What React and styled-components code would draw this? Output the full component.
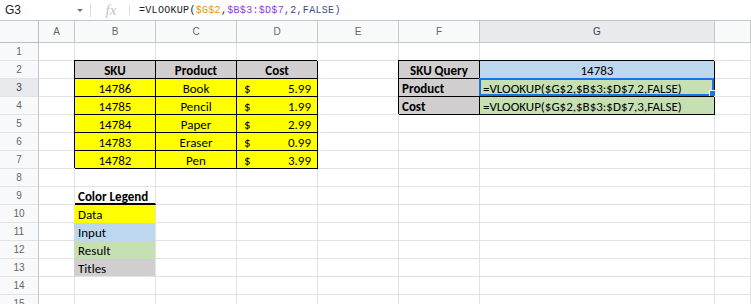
import React from 'react';
import styled, { createGlobalStyle } from 'styled-components';

const GlobalStyle = createGlobalStyle`
  html, body {
    margin: 0;
    padding: 0;
    background: #fff;
  }
  body {
    width: 751px;
    height: 304px;
    overflow: hidden;
  }
`;

const GRID = '#e2e2e2';
const HEAD_LINE = '#c4c7c5';
const YELLOW = '#ffff00';
const BLUE = '#bdd7ee';
const GREEN = '#c6e0b4';
const GRAY = '#d0cece';

const COLS = ['A', 'B', 'C', 'D', 'E', 'F', 'G', ''];

const Sheet = styled.div`
  width: 751px;
  height: 304px;
  overflow: hidden;
  font-family: "Liberation Sans", Arial, sans-serif;
`;

const FormulaBar = styled.div`
  display: flex;
  align-items: center;
  height: 21px;
  box-sizing: border-box;
  border-bottom: 1px solid ${HEAD_LINE};
`;

const NameBox = styled.div`
  display: flex;
  align-items: center;
  justify-content: space-between;
  width: 90px;
  padding: 0 7px 0 5px;
  box-sizing: border-box;
  font-size: 12px;
  color: #202124;
`;

const DropArrow = styled.span`
  width: 0;
  height: 0;
  border-left: 3px solid transparent;
  border-right: 3px solid transparent;
  border-top: 3px solid #757575;
  margin-top: 1px;
`;

const Divider = styled.span`
  width: 1px;
  height: ${p => p.$h}px;
  background: #dadce0;
`;

const FxLabel = styled.div`
  width: 38px;
  text-align: center;
  font-family: "Liberation Serif", serif;
  font-style: italic;
  font-size: 15px;
  color: #c4c4c4;
  padding-left: 2px;
  box-sizing: border-box;
`;

const FormulaText = styled.div`
  padding-left: 9px;
  font-family: "Liberation Mono", "DejaVu Sans Mono", monospace;
  font-size: 10px;
  letter-spacing: 0.3px;
  color: #202124;
`;

const Token = styled.span`
  color: ${p => p.$tone || '#202124'};
`;

const Grid = styled.div`
  display: grid;
  grid-template-columns: 39px 36px 81px 81px 81px 81px 81px 235px 1fr;
  grid-auto-rows: 18px;
  grid-template-rows: 22px;
`;

const Corner = styled.div`
  background: #f8f9fa;
  border-right: 1px solid #bdbdbd;
  border-bottom: 1px solid #bdbdbd;
`;

const ColHeader = styled.div`
  display: flex;
  align-items: center;
  justify-content: center;
  background: ${p => (p.$active ? '#e8eaed' : '#f8f9fa')};
  border-right: 1px solid ${HEAD_LINE};
  border-bottom: 1px solid ${HEAD_LINE};
  font-size: 10px;
  color: ${p => (p.$active ? '#3c4043' : '#666')};
`;

const RowHeader = styled.div`
  display: flex;
  align-items: center;
  justify-content: center;
  background: ${p => (p.$active ? '#e8eaed' : '#f8f9fa')};
  border-right: 1px solid ${HEAD_LINE};
  border-bottom: 1px solid ${GRID};
  font-size: 10px;
  color: ${p => (p.$active ? '#3c4043' : '#666')};
`;

const Cell = styled.div`
  position: relative;
  display: flex;
  align-items: flex-end;
  justify-content: ${p =>
    p.$align === 'center' ? 'center' : p.$align === 'right' ? 'flex-end' : 'space-between'};
  padding: 0 ${p => (p.$money ? 6 : 3)}px 0 ${p => (p.$money ? 7 : 3)}px;
  background: ${p => p.$fill || '#fff'};
  border-right: 1px solid ${p => (p.$boxed ? '#000' : GRID)};
  border-bottom: ${p =>
    p.$thick ? '2px solid #000' : `1px solid ${p.$boxed ? '#000' : p.$seamless ? p.$fill : GRID}`};
  box-shadow: ${p =>
    p.$boxed ? '-1px -1px 0 0 #000' : p.$fill ? `-1px 0 0 0 ${p.$fill}` : 'none'};
  font-family: "Carlito", "Calibri", "Lato", sans-serif;
  font-size: 13px;
  line-height: ${p => (p.$thick ? 12 : 14)}px;
  font-weight: ${p => (p.$bold ? 700 : 400)};
  color: #000;
  white-space: nowrap;
`;

const Selection = styled.div`
  position: absolute;
  left: -1px;
  top: -1px;
  right: 0;
  bottom: 0;
  border: 2px solid #1a73e8;
  pointer-events: none;
`;

const Handle = styled.span`
  position: absolute;
  right: -4px;
  bottom: -3px;
  width: 5px;
  height: 5px;
  background: #1a73e8;
  border: 1px solid #fff;
`;

const title = (text, align = 'center') => ({ text, fill: GRAY, bold: true, boxed: true, align });
const data = text => ({ text, fill: YELLOW, boxed: true, align: 'center' });
const cost = value => ({ money: ['$', value], fill: YELLOW, boxed: true });
const legend = (text, fill, seamless = true) => ({ text, fill, seamless });

const ROWS = [
  {},
  { B: title('SKU'), C: title('Product'), D: title('Cost'), F: title('SKU Query'), G: { text: '14783', fill: BLUE, boxed: true, align: 'center' } },
  { B: data('14786'), C: data('Book'), D: cost('5.99'), F: title('Product', 'left'), G: { text: '=VLOOKUP($G$2,$B$3:$D$7,2,FALSE)', fill: GREEN, boxed: true, selected: true } },
  { B: data('14785'), C: data('Pencil'), D: cost('1.99'), F: title('Cost', 'left'), G: { text: '=VLOOKUP($G$2,$B$3:$D$7,3,FALSE)', fill: GREEN, boxed: true } },
  { B: data('14784'), C: data('Paper'), D: cost('2.99') },
  { B: data('14783'), C: data('Eraser'), D: cost('0.99') },
  { B: data('14782'), C: data('Pen'), D: cost('3.99') },
  {},
  { B: { text: 'Color Legend', bold: true, thick: true } },
  { B: legend('Data', YELLOW) },
  { B: legend('Input', BLUE) },
  { B: legend('Result', GREEN) },
  { B: legend('Titles', GRAY, false) },
  {},
  {},
];

function SheetCell({ cell }) {
  if (!cell) return <Cell />;
  return (
    <Cell
      $fill={cell.fill}
      $boxed={cell.boxed}
      $bold={cell.bold}
      $align={cell.money ? 'money' : cell.align || 'left'}
      $money={!!cell.money}
      $thick={cell.thick}
      $seamless={cell.seamless}
    >
      {cell.money ? (
        <>
          <span>{cell.money[0]}</span>
          <span>{cell.money[1]}</span>
        </>
      ) : (
        <span>{cell.text}</span>
      )}
      {cell.selected && (
        <Selection>
          <Handle />
        </Selection>
      )}
    </Cell>
  );
}

export default function App() {
  return (
    <Sheet>
      <GlobalStyle />
      <FormulaBar>
        <NameBox>
          G3
          <DropArrow />
        </NameBox>
        <Divider $h={14} />
        <FxLabel>fx</FxLabel>
        <Divider $h={10} />
        <FormulaText>
          <Token>=VLOOKUP(</Token>
          <Token $tone="#f09300">$G$2</Token>
          <Token>,</Token>
          <Token $tone="#9334e6">$B$3:$D$7</Token>
          <Token $tone="#3c4a86">,2,FALSE)</Token>
        </FormulaText>
      </FormulaBar>
      <Grid>
        <Corner />
        {COLS.map((c, i) => (
          <ColHeader key={i} $active={c === 'G'}>{c}</ColHeader>
        ))}
        {ROWS.map((row, r) => (
          <React.Fragment key={r}>
            <RowHeader $active={r === 2}>{r + 1}</RowHeader>
            {COLS.map((c, i) => (
              <SheetCell key={i} cell={row[c]} />
            ))}
          </React.Fragment>
        ))}
      </Grid>
    </Sheet>
  );
}
